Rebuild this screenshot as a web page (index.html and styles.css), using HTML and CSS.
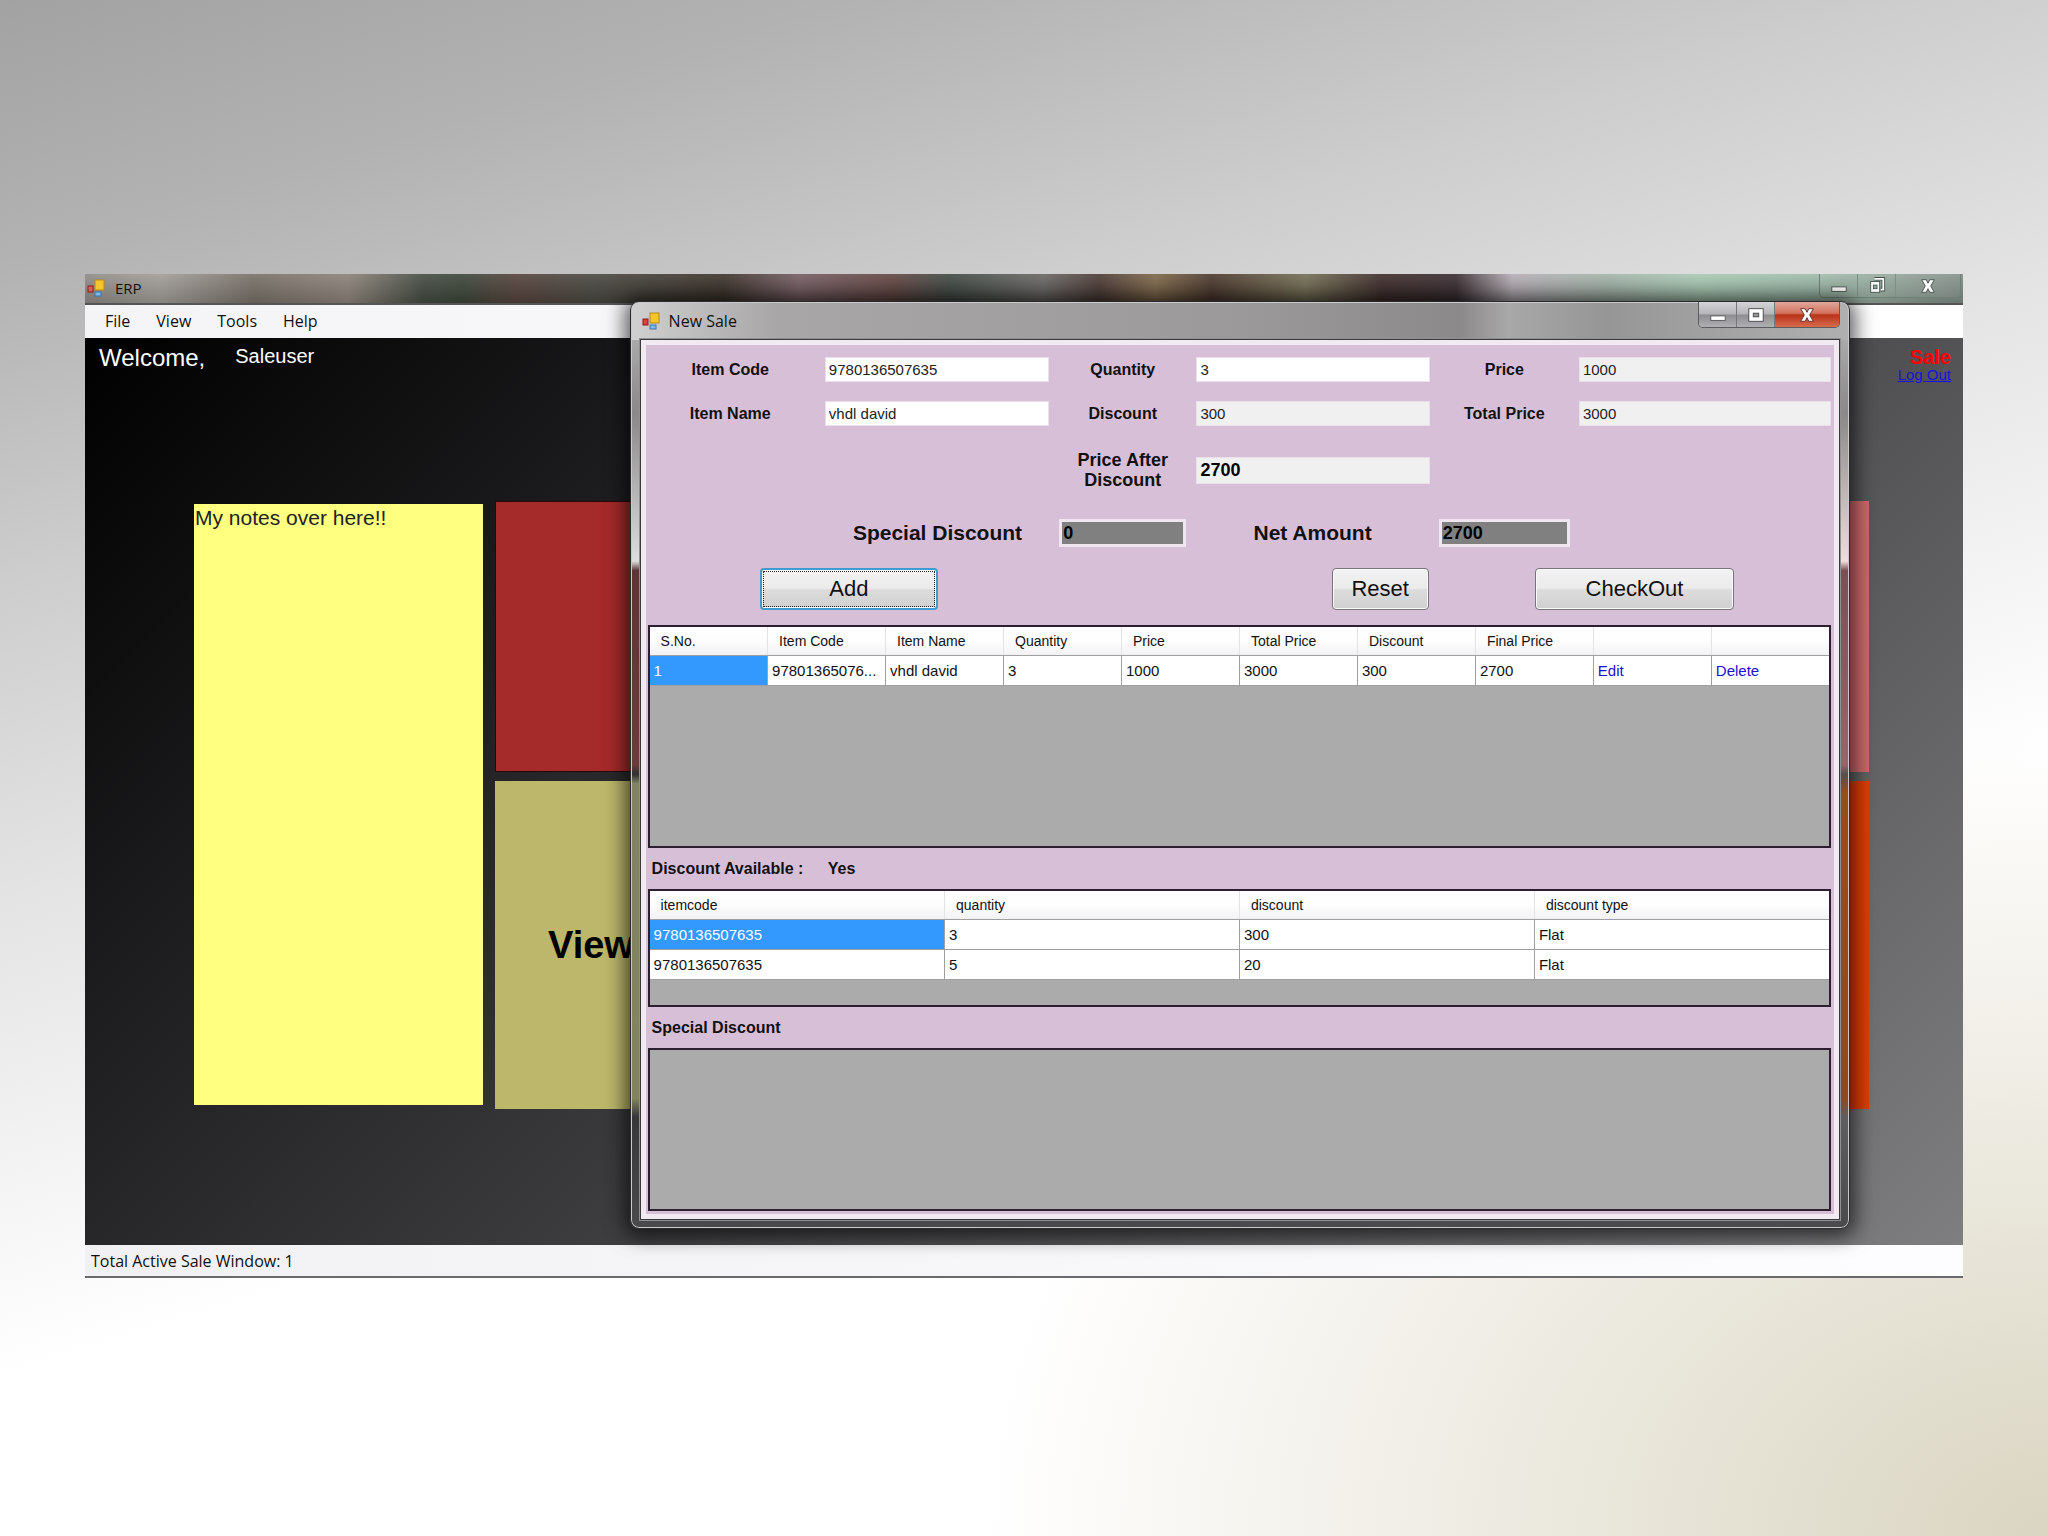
FILE: index.html
```html
<!DOCTYPE html>
<html lang="en">
<head>
    <meta charset="UTF-8">
    <meta name="viewport" content="width=device-width, initial-scale=1.0">
    <title>ERP - New Sale</title>
    <link rel="stylesheet" href="styles.css">
</head>
<body>

    <!-- Main window -->
    <div class="erp-window">
        <header class="erp-titlebar">
            <svg class="app-icon" viewBox="0 0 18 18">
                <rect x="8" y="1" width="9" height="10" fill="#f6c52c" stroke="#b98a1c"/>
                <rect x="1" y="7" width="5" height="6" fill="#d9605a" stroke="#8e1b1b"/>
                <rect x="8" y="13" width="6" height="4" fill="#7db8ea" stroke="#3a76b5"/>
            </svg>
            <span class="erp-title">ERP</span>
            <div class="window-buttons outer-buttons">
                <button class="min" aria-label="Minimize ERP"><svg viewBox="0 0 20 20"><rect x="2" y="11" width="16" height="5" fill="#fff" stroke="#45504c"/></svg></button>
                <button class="max" aria-label="Restore ERP"><svg viewBox="0 0 20 20"><path d="M7 2h10v12h-3" fill="none" stroke="#45504c" stroke-width="4"/><path d="M7 2h10v12h-3" fill="none" stroke="#fff" stroke-width="2"/><rect x="3" y="5" width="10" height="12" fill="#fff" stroke="#45504c"/><rect x="6" y="9" width="4" height="4" fill="#8ea79b" stroke="#45504c"/></svg></button>
                <button class="close" aria-label="Close ERP"><svg viewBox="0 0 20 20"><path d="M3 3h5l2 4 2-4h5l-4 7 4 7h-5l-2-4-2 4H3l4-7z" fill="#fff" stroke="#45504c"/></svg></button>
            </div>
        </header>

        <nav class="menu">
            <button>File</button>
            <button>View</button>
            <button>Tools</button>
            <button>Help</button>
        </nav>

        <main class="workspace">
            <div class="user-bar">
                <span class="welcome">Welcome,</span>
                <span class="user-name">Saleuser</span>
                <div class="account">
                    <strong>Sale</strong>
                    <a href="#">Log Out</a>
                </div>
            </div>
            <div class="tiles">
                <textarea class="notes" aria-label="Notes">My notes over here!!</textarea>
                <div class="tile red"></div>
                <div class="tile salmon"></div>
                <div class="tile khaki">View</div>
                <div class="tile orange"></div>
            </div>
        </main>

        <footer class="status">Total Active Sale Window: 1</footer>

        <!-- New Sale dialog -->
        <section class="dialog">
            <header class="dialog-titlebar">
                <svg class="app-icon" viewBox="0 0 18 18">
                    <rect x="8" y="1" width="9" height="10" fill="#f6c52c" stroke="#b98a1c"/>
                    <rect x="1" y="7" width="5" height="6" fill="#d9453c" stroke="#8e1b1b"/>
                    <rect x="8" y="13" width="6" height="4" fill="#7db8ea" stroke="#3a76b5"/>
                </svg>
                <span>New Sale</span>
                <div class="window-buttons">
                    <button class="min" aria-label="Minimize"><svg viewBox="0 0 20 20"><rect x="2" y="11" width="16" height="5" fill="#fff" stroke="#555"/></svg></button>
                    <button class="max" aria-label="Maximize"><svg viewBox="0 0 20 20"><rect x="2" y="3" width="16" height="14" fill="#fff" stroke="#444"/><rect x="7" y="8" width="6" height="4" fill="#999" stroke="#444"/></svg></button>
                    <button class="close" aria-label="Close"><svg viewBox="0 0 20 20"><path d="M3 3h5l2 4 2-4h5l-4 7 4 7h-5l-2-4-2 4H3l4-7z" fill="#fff" stroke="#5b2a26"/></svg></button>
                </div>
            </header>

            <form class="dialog-body">
                <div class="fields">
                    <label for="itemCode">Item Code</label>
                    <input type="text" id="itemCode" value="9780136507635">
                    <label for="quantity">Quantity</label>
                    <input type="text" id="quantity" value="3">
                    <label for="price">Price</label>
                    <input type="text" id="price" value="1000" readonly>

                    <label for="itemName">Item Name</label>
                    <input type="text" id="itemName" value="vhdl david">
                    <label for="discount">Discount</label>
                    <input type="text" id="discount" value="300" readonly>
                    <label for="totalPrice">Total Price</label>
                    <input type="text" id="totalPrice" value="3000" readonly>
                </div>

                <div class="fields after">
                    <label for="afterDiscount">Price After<br>Discount</label>
                    <input type="text" id="afterDiscount" value="2700" readonly>
                </div>

                <div class="totals">
                    <label for="specialDiscount">Special Discount</label>
                    <input type="text" id="specialDiscount" value="0">
                    <label for="netAmount" class="net">Net Amount</label>
                    <input type="text" id="netAmount" value="2700" class="net-input">
                </div>

                <div class="actions">
                    <button type="button" class="add">Add</button>
                    <button type="button" class="reset">Reset</button>
                    <button type="button" class="checkout">CheckOut</button>
                </div>

                <div class="data-grid items">
                    <table>
                        <thead>
                            <tr>
                                <th>S.No.</th>
                                <th>Item Code</th>
                                <th>Item Name</th>
                                <th>Quantity</th>
                                <th>Price</th>
                                <th>Total Price</th>
                                <th>Discount</th>
                                <th>Final Price</th>
                                <th></th>
                                <th></th>
                            </tr>
                        </thead>
                        <tbody>
                            <tr>
                                <td class="selected">1</td>
                                <td>97801365076...</td>
                                <td>vhdl david</td>
                                <td>3</td>
                                <td>1000</td>
                                <td>3000</td>
                                <td>300</td>
                                <td>2700</td>
                                <td><a href="#">Edit</a></td>
                                <td><a href="#">Delete</a></td>
                            </tr>
                        </tbody>
                    </table>
                </div>

                <p class="caption">Discount Available : <span>Yes</span></p>

                <div class="data-grid discounts">
                    <table>
                        <thead>
                            <tr>
                                <th>itemcode</th>
                                <th>quantity</th>
                                <th>discount</th>
                                <th>discount type</th>
                            </tr>
                        </thead>
                        <tbody>
                            <tr>
                                <td class="selected">9780136507635</td>
                                <td>3</td>
                                <td>300</td>
                                <td>Flat</td>
                            </tr>
                            <tr>
                                <td>9780136507635</td>
                                <td>5</td>
                                <td>20</td>
                                <td>Flat</td>
                            </tr>
                        </tbody>
                    </table>
                </div>

                <p class="caption">Special Discount</p>

                <div class="data-grid specials"></div>
            </form>
        </section>
    </div>

</body>
</html>
```

FILE: styles.css
```css
* {
    box-sizing: border-box;
}
body {
    margin: 0;
    padding: 274px 85px 80px;
    min-height: 100vh;
    font-family: "Liberation Sans", Arial, sans-serif;
    font-size: 15px;
    color: #111;
    background:
        radial-gradient(ellipse at 100% 100%, #dad5c1 0%, rgba(218, 213, 193, 0) 37%),
        linear-gradient(163deg, #a2a2a2 0%, #b2b2b2 12%, #cdcdcd 27%, #e4e4e4 42%, #fff 64%);
}
button {
    font-family: inherit;
    color: inherit;
    cursor: pointer;
}

/* Main window */
.erp-window {
    position: relative;
    border-bottom: 2px solid #6a6a6c;
}
.erp-titlebar {
    display: flex;
    align-items: center;
    gap: 10px;
    height: 31px;
    padding: 0 0 2px 2px;
    font-family: "Open Sans", "Noto Sans", sans-serif;
    border-bottom: 2px solid #555;
    background:
        linear-gradient(rgba(255, 255, 255, 0.1), rgba(0, 0, 0, 0.15)),
        linear-gradient(90deg, #8d8983 0%, #a09c97 4%, #766e66 9%, #8a8178 14%, #434a40 18%, #3a4438 20%, #53403a 23%, #47463f 27%, #3b322a 34%, #745c62 38%, #614440 43%, #3f4843 46%, #686663 51%, #4b3a35 54%, #7e6748 57%, #4a372c 60%, #736e54 65%, #3e2c2a 69%, #382c30 73%, #b5adb4 76%, #a2b3a8 81%, #a8c9b3 86%, #9dbba9 92%, #8fa397 96%, #7d8a83 100%);
}
.app-icon {
    width: 18px;
    height: 18px;
}
.window-buttons {
    display: flex;
    align-self: flex-start;
    margin-left: auto;
    height: 26px;
    border: 1px solid #5c5c5e;
    border-top: 0;
    border-radius: 0 0 5px 5px;
    overflow: hidden;
}
.window-buttons button {
    display: flex;
    align-items: center;
    justify-content: center;
    width: 38px;
    padding: 0;
    border: 0;
    border-right: 1px solid #77787a;
    background: linear-gradient(#d5d5d8 0%, #b5b5b9 48%, #8d8d92 52%, #b0b0b4 100%);
}
.window-buttons svg {
    width: 18px;
    height: 18px;
}
.window-buttons .close {
    width: 64px;
    border-right: 0;
    background: linear-gradient(#e0a79a 0%, #d4715c 45%, #b83318 52%, #d96a4c 100%);
}
.outer-buttons {
    height: 24px;
    margin-right: 2px;
    border-color: #6f8078;
}
.outer-buttons button,
.outer-buttons .close {
    border-color: #7c9085;
    background: rgba(255, 255, 255, 0.05);
}
.menu {
    display: flex;
    align-items: center;
    gap: 26px;
    height: 33px;
    padding: 0 0 2px 20px;
    background: linear-gradient(90deg, #f4f4f6, #fff);
}
.menu button {
    padding: 0;
    border: 0;
    background: none;
    font-family: "Open Sans", "Noto Sans", sans-serif;
    font-size: 16px;
}
.workspace {
    min-height: 907px;
    background: linear-gradient(135deg, #000 0%, #202022 27%, #3c3b3e 50%, #7e7d7f 100%);
}
.user-bar {
    display: flex;
    height: 163px;
    padding: 4px 12px 0 14px;
    color: #fff;
}
.welcome {
    font-size: 24px;
    line-height: 32px;
}
.user-name {
    margin-left: 30px;
    font-size: 20px;
    line-height: 28px;
}
.account {
    display: flex;
    flex-direction: column;
    align-items: flex-end;
    margin-left: auto;
    padding-top: 6px;
    font-size: 15px;
    line-height: 18px;
}
.account strong {
    color: #f00;
    font-size: 20px;
}
.account a {
    color: #1a12e0;
}
.tiles {
    display: grid;
    grid-template-columns: 289px 1fr 1fr;
    grid-template-rows: 271px 328px;
    gap: 9px 12px;
    width: 95%;
    padding-left: 109px;
}
.notes {
    grid-row: span 2;
    margin: 3px 0 4px;
    padding: 2px 1px;
    border: 0;
    resize: none;
    background: #ffff80;
    color: #222;
    font-family: inherit;
    font-size: 21px;
}
.tile {
    min-width: 0;
}
.red {
    background: #a52a2a;
    border: 1px solid #2a0808;
}
.salmon {
    background: #cd6a6c;
}
.khaki {
    display: flex;
    align-items: center;
    padding-left: 53px;
    background: #bdb76b;
    color: #000;
    font-size: 38px;
    font-weight: bold;
}
.orange {
    background: #e03e00;
}
.status {
    height: 31px;
    padding-left: 6px;
    background: linear-gradient(90deg, #f1f0f3, #fdfcfe);
    font-family: "Open Sans", "Noto Sans", sans-serif;
    font-size: 16px;
    line-height: 32px;
}

/* New Sale dialog */
.dialog {
    position: absolute;
    top: 27px;
    left: 29%;
    width: 65%;
    padding: 0 9px 8px;
    border: 1px solid #2b2b2d;
    border-radius: 9px;
    box-shadow: inset 0 0 0 1px #c9c9cb, 0 2px 20px 5px rgba(0, 0, 0, 0.65);
    background:
        linear-gradient(90deg, #d0d0d0 0%, #a8a6a6 12%, #9b9999 50%, #8b8989 68%, #a9a8a8 72%, #979696 80%, #b0b0b0 100%) top / 100% 38px no-repeat,
        linear-gradient(#bbb 0%, #8a8888 12%, #ddd 28%, #5e3535 29%, #6a3c3a 50%, #2e3130 51%, #808263 52%, #83845e 86%, #38383a 88%, #4a4a4c 100%) left / 50% 100% no-repeat,
        linear-gradient(#bbb 0%, #8a8888 12%, #f0dcdc 28%, #7a5055 29%, #96666a 50%, #54504e 51%, #9b4b1c 53%, #8c4a22 86%, #5e5e60 88%, #4a4a4c 100%) right / 50% 100% no-repeat;
}
.dialog-titlebar {
    display: flex;
    align-items: center;
    gap: 9px;
    height: 37px;
    padding-left: 2px;
    font-family: "Open Sans", "Noto Sans", sans-serif;
    font-size: 16px;
}
.dialog-body {
    padding: 12px 8px 8px 7px;
    border: 1px solid #3b3a3d;
    outline: 1px solid #909092;
    background: #d8bfd8;
    box-shadow: inset 0 0 0 5px #f1ebf1;
}
.fields {
    display: grid;
    grid-template-columns: 177fr 224fr 147fr 233fr 149fr 252fr;
    gap: 19px 0;
    align-items: center;
    padding: 5px 0 0;
    text-align: center;
}
.fields label {
    font-size: 16px;
    font-weight: bold;
}
.fields > label:nth-of-type(3n + 1) {
    padding-right: 12px;
}
.fields input {
    width: 100%;
    height: 25px;
    min-width: 0;
    padding: 0 3px;
    border: 1px solid #e9e0ea;
    background: #fff;
    color: #222;
    font-family: inherit;
    font-size: 15px;
}
.fields input[readonly] {
    background: #f1f0f1;
}
.fields.after {
    padding-top: 24px;
}
.fields.after label {
    grid-column: 3;
    padding: 0;
    font-size: 18px;
    line-height: 20px;
}
.fields.after input {
    height: 27px;
    font-size: 18px;
    font-weight: bold;
    color: #000;
}
.totals {
    display: grid;
    grid-template-columns: 205fr 206fr 127fr 67fr 185fr 131fr 261fr;
    align-items: center;
    margin-top: 29px;
}
.totals label {
    grid-column: 2;
    font-size: 21px;
    font-weight: bold;
    white-space: nowrap;
}
.totals .net {
    grid-column: 5;
}
.totals input {
    width: 100%;
    height: 28px;
    min-width: 0;
    padding: 0 1px;
    border: 3px solid #efe6ef;
    background: #808080;
    color: #000;
    font-family: inherit;
    font-size: 18px;
    font-weight: bold;
}
.actions {
    display: grid;
    grid-template-columns: 112fr 178fr 393fr 97fr 106fr 199fr 97fr;
    margin: 21px 0 15px;
}
.actions button {
    height: 42px;
    padding: 0;
    border: 1px solid #77757a;
    border-radius: 4px;
    box-shadow: inset 0 0 0 1px #fafafa;
    background: linear-gradient(#f2f2f2 0%, #ebebeb 48%, #dcdcdc 52%, #d0d0d0 100%);
    font-size: 22px;
}
.actions .add {
    grid-column: 2;
    border: 2px solid #3d9bd0;
    outline: 1px dotted #222;
    outline-offset: -4px;
}
.actions .reset {
    grid-column: 4;
}
.actions .checkout {
    grid-column: 6;
}

/* Data grids */
.data-grid {
    border: 2px solid #2c2030;
    background: #ababab;
}
.items {
    height: 223px;
}
.discounts {
    height: 118px;
}
.specials {
    height: 163px;
}
.data-grid table {
    width: 100%;
    table-layout: fixed;
    border-collapse: collapse;
}
.data-grid th {
    height: 28px;
    padding: 0 0 0 11px;
    border-right: 1px solid #e4e4e6;
    border-bottom: 1px solid #a0a0a0;
    background: linear-gradient(#fff 0%, #fdfdfd 50%, #f2f2f4 100%);
    font-size: 14px;
    font-weight: normal;
    text-align: left;
}
.data-grid td {
    height: 30px;
    padding: 0 0 0 4px;
    border-right: 1px solid #a0a0a0;
    border-bottom: 1px solid #a0a0a0;
    background: #fff;
    white-space: nowrap;
}
.data-grid th:last-child,
.data-grid td:last-child {
    border-right: 0;
}
.data-grid td.selected {
    background: #3399ff;
    color: #fff;
}
.data-grid a {
    color: #1a10d0;
    text-decoration: none;
}
.caption {
    margin: 0;
    padding-left: 4px;
    font-size: 16px;
    font-weight: bold;
    line-height: 41px;
}
.caption span {
    margin-left: 20px;
}
```
